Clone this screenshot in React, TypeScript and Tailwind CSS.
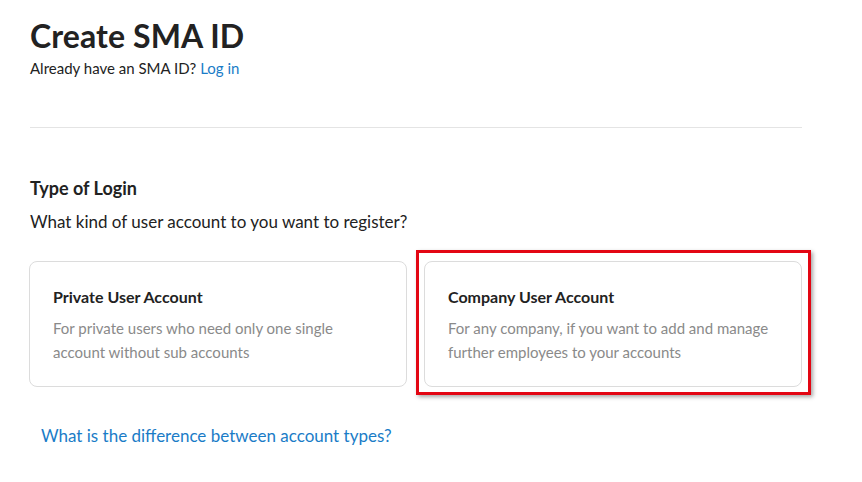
export default function App() {
  return (
    <div className="min-h-screen bg-white text-[#222] font-['Lato',sans-serif]">
      <div className="w-[772px] ml-[30px] pt-[16px]">
        <h1 className="text-[32px] font-bold leading-[40px] tracking-[0.1px]">Create SMA ID</h1>
        <p className="text-[15px] leading-[20px] mt-[2px]">
          Already have an SMA ID? <a className="text-[#1a7cc7]">Log in</a>
        </p>

        <div className="h-px bg-[#e4e4e4] mt-[49px]" />

        <h2 className="text-[18px] font-bold leading-[24px] mt-[48px]">Type of Login</h2>
        <p className="text-[17px] leading-[24px] mt-[10px]">What kind of user account to you want to register?</p>

        <div className="grid grid-cols-2 gap-[17px] mt-[27px] -ml-px">
          <div className="border border-[#dcdcdc] rounded-[8px] h-[126px] px-[23px] pt-[25px]">
            <div className="text-[16px] font-bold leading-[20px]">Private User Account</div>
            <p className="text-[15px] leading-[24px] text-[#8a8a8a] mt-[9px]">
              For private users who need only one single account without sub accounts
            </p>
          </div>
          <div className="relative">
            <div className="border border-[#dcdcdc] rounded-[8px] h-[126px] px-[23px] pt-[25px]">
              <div className="text-[16px] font-bold leading-[20px]">Company User Account</div>
              <p className="text-[15px] leading-[24px] text-[#8a8a8a] mt-[9px]">
                For any company, if you want to add and manage further employees to your accounts
              </p>
            </div>
            <div className="absolute left-[-8px] top-[-11px] w-[395px] h-[145px] border-[3px] border-[#e30613] shadow-[2px_2px_4px_rgba(0,0,0,0.35)]" />
          </div>
        </div>

        <a className="block text-[17px] leading-[24px] text-[#1a7cc7] mt-[37px] ml-[11px]">
          What is the difference between account types?
        </a>
      </div>
    </div>
  );
}
